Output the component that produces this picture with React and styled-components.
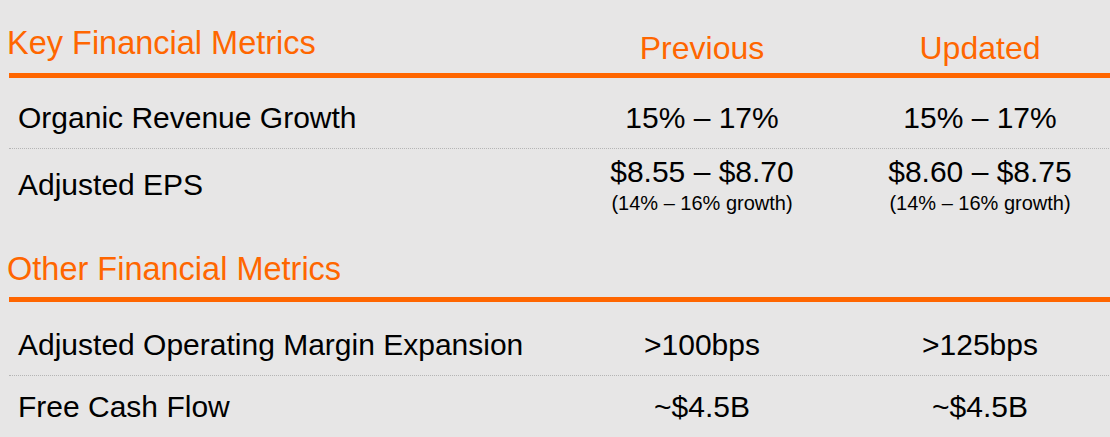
import React from "react";
import styled, { createGlobalStyle } from "styled-components";

const GlobalStyle = createGlobalStyle`
  html, body {
    margin: 0;
    padding: 0;
    background: #e7e6e6;
    overflow: hidden;
  }
  body {
    font-family: "Liberation Sans", Arial, sans-serif;
    color: #000;
  }
`;

const Page = styled.div`
  width: 1110px;
  height: 437px;
  padding-left: 9px;
  box-sizing: border-box;
  overflow: hidden;
`;

const Grid = styled.div`
  display: grid;
  grid-template-columns: 554px 278px 278px;
  width: 1110px;
`;

const SectionHeader = styled(Grid)`
  height: ${(p) => p.$h}px;
  border-bottom: 5px solid #ff6600;
`;

const SectionTitle = styled.div`
  margin-top: ${(p) => p.$top}px;
  margin-left: -2px;
  font-size: 32.5px;
  line-height: 40px;
  color: #ff6600;
  white-space: nowrap;
`;

const ColHead = styled.div`
  margin-top: ${(p) => p.$top}px;
  font-size: 32px;
  line-height: 40px;
  color: #ff6600;
  text-align: center;
`;

const Row = styled(Grid)`
  height: ${(p) => p.$h}px;
  border-bottom: ${(p) => (p.$divider ? "1px dotted #b5b5b5" : "none")};
`;

const Label = styled.div`
  padding-top: ${(p) => p.$top}px;
  padding-left: 9px;
  font-size: 30px;
  line-height: 36px;
  white-space: nowrap;
`;

const Value = styled.div`
  padding-top: ${(p) => p.$top}px;
  text-align: center;
  display: flex;
  flex-direction: column;
  align-items: center;
`;

const Main = styled.div`
  font-size: 30px;
  line-height: ${(p) => (p.$tight ? 34 : 36)}px;
  white-space: nowrap;
`;

const Sub = styled.div`
  margin-top: 3px;
  font-size: 20px;
  line-height: 22px;
  white-space: nowrap;
`;

const rowsA = [
  { label: "Organic Revenue Growth", prev: "15% – 17%", upd: "15% – 17%", h: 70, top: 22, divider: true },
  {
    label: "Adjusted EPS",
    prev: "$8.55 – $8.70",
    upd: "$8.60 – $8.75",
    sub: "(14% – 16% growth)",
    h: 81,
    top: 18,
    valTop: 6,
  },
];

const rowsB = [
  { label: "Adjusted Operating Margin Expansion", prev: ">100bps", upd: ">125bps", h: 73, top: 25, divider: true },
  { label: "Free Cash Flow", prev: "~$4.5B", upd: "~$4.5B", h: 61, top: 13 },
];

function MetricRow({ r }) {
  const vt = r.valTop ?? r.top;
  return (
    <Row $h={r.h} $divider={r.divider}>
      <Label $top={r.top}>{r.label}</Label>
      <Value $top={vt}>
        <Main $tight={!!r.sub}>{r.prev}</Main>
        {r.sub && <Sub>{r.sub}</Sub>}
      </Value>
      <Value $top={vt}>
        <Main $tight={!!r.sub}>{r.upd}</Main>
        {r.sub && <Sub>{r.sub}</Sub>}
      </Value>
    </Row>
  );
}

export default function App() {
  return (
    <>
      <GlobalStyle />
      <Page>
        <SectionHeader $h={73}>
          <SectionTitle $top={23}>Key Financial Metrics</SectionTitle>
          <ColHead $top={28}>Previous</ColHead>
          <ColHead $top={28}>Updated</ColHead>
        </SectionHeader>
        {rowsA.map((r) => (
          <MetricRow key={r.label} r={r} />
        ))}
        <SectionHeader $h={67}>
          <SectionTitle $top={19}>Other Financial Metrics</SectionTitle>
        </SectionHeader>
        {rowsB.map((r) => (
          <MetricRow key={r.label} r={r} />
        ))}
      </Page>
    </>
  );
}
